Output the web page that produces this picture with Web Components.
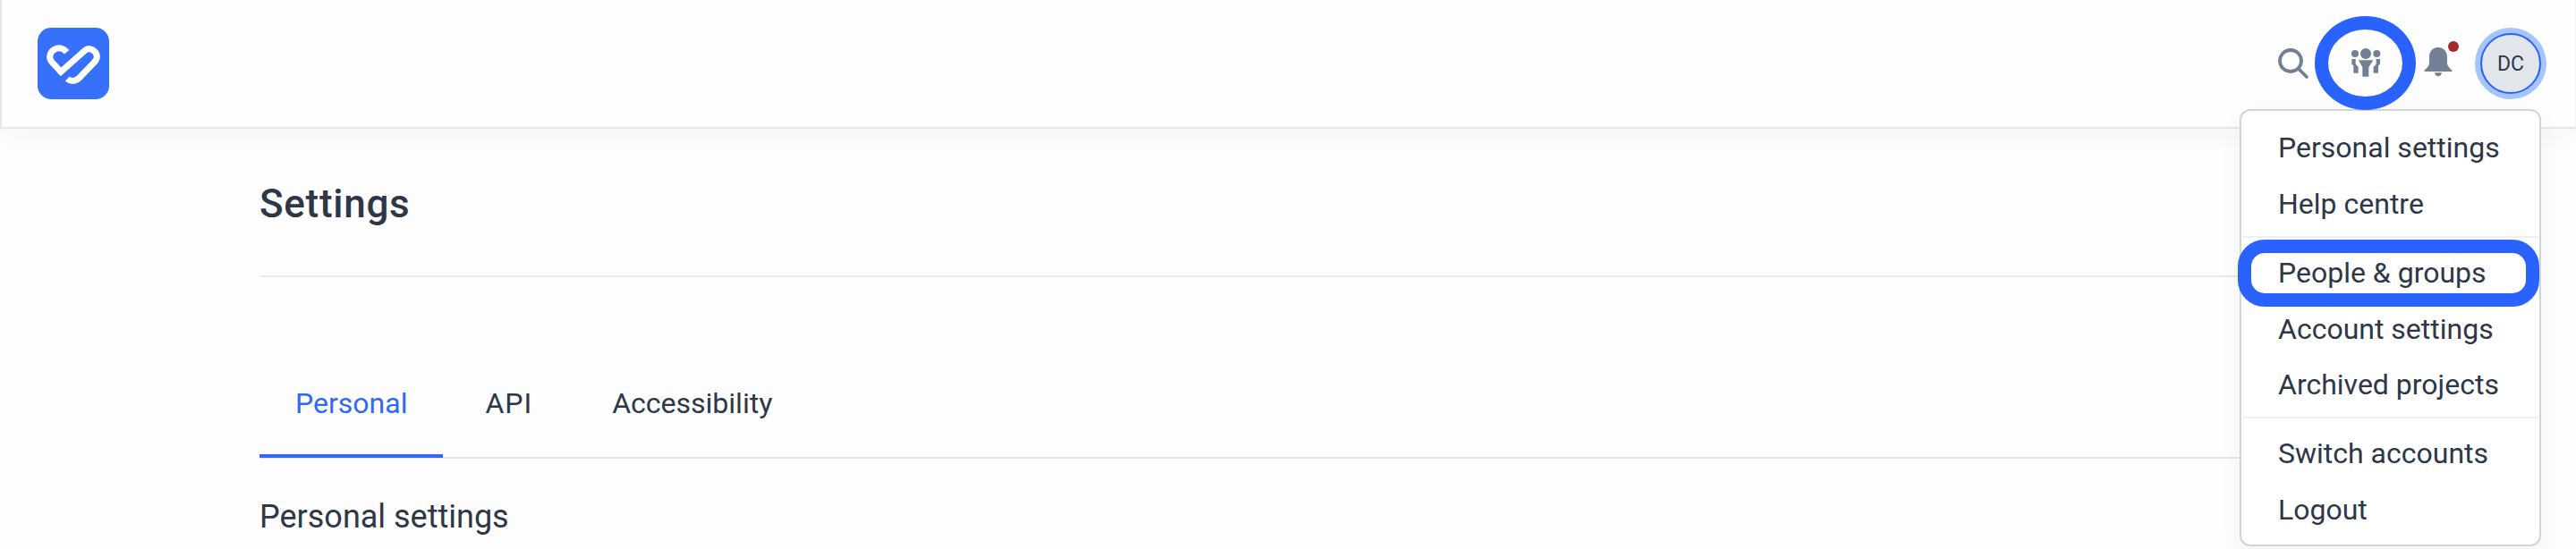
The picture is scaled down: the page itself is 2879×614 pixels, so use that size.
<!DOCTYPE html>
<html lang="en">
<head>
<meta charset="utf-8">
<title>Settings</title>
<style>
  html, body { margin: 0; padding: 0; background: #fdfdfd; }
  body { width: 2879px; height: 614px; overflow: hidden; font-family: Roboto, "Liberation Sans", sans-serif; color: #2d3748; }
</style>
</head>
<body>
<app-shell>
  <top-bar>
    <icon-button slot="actions" icon="search"></icon-button>
    <icon-button slot="actions" icon="people" ringed></icon-button>
    <icon-button slot="actions" icon="bell" dot></icon-button>
    <user-avatar slot="actions">DC</user-avatar>
  </top-bar>
  <settings-page>
    <span slot="title">Settings</span>
    <tab-item slot="tabs" active>Personal</tab-item>
    <tab-item slot="tabs" style="letter-spacing: 1px">API</tab-item>
    <tab-item slot="tabs">Accessibility</tab-item>
    <span slot="section">Personal settings</span>
  </settings-page>
  <user-menu>
    <menu-group first>
      <menu-item>Personal settings</menu-item>
      <menu-item>Help centre</menu-item>
    </menu-group>
    <menu-group>
      <menu-item>People &amp; groups</menu-item>
      <menu-item>Account settings</menu-item>
      <menu-item>Archived projects</menu-item>
    </menu-group>
    <menu-group last>
      <menu-item>Switch accounts</menu-item>
      <menu-item>Logout</menu-item>
    </menu-group>
  </user-menu>
</app-shell>

<script>
class AppShell extends HTMLElement {
  constructor() {
    super();
    this.attachShadow({ mode: "open" });
  }

  connectedCallback() {
    this.shadowRoot.innerHTML = `
      <style>
        :host { display: block; position: relative; width: 2879px; height: 614px; overflow: hidden; }
      </style>
      <slot></slot>
    `;
  }
}

class TopBar extends HTMLElement {
  constructor() {
    super();
    this.attachShadow({ mode: "open" });
  }

  connectedCallback() {
    this.shadowRoot.innerHTML = `
      <style>
        :host {
          display: flex;
          align-items: center;
          justify-content: space-between;
          box-sizing: border-box;
          height: 144px;
          padding: 0 32px 0 40px;
          background: #fefefe;
          border-left: 2px solid #e4e7eb;
          border-right: 1px solid #eff1f3;
          border-bottom: 2px solid #e4e7eb;
          box-shadow: 0 6px 24px rgba(45, 55, 72, 0.035);
        }
        .logo { display: block; width: 80px; height: 80px; }
        .actions { display: flex; align-items: center; }
      </style>
      <svg class="logo" viewBox="126 90 240 240">
        <rect x="126" y="90" width="240" height="240" rx="46" fill="#3670fb"/>
        <path d="M224 172 C214 160 198 154 184 162 C166 171 162 192 174 205 L204 238 L285 166 C298 154 324 166 325 187 C325 197 320 203 314 208 L266 258 C254 270 238 272 226 261"
          fill="none" stroke="#fff" stroke-width="21"/>
      </svg>
      <div class="actions"><slot name="actions"></slot></div>
    `;
  }
}

const ICONS = {
  search: `<svg width="36" height="36" viewBox="0 0 36 36" fill="none" stroke="#718096">
      <circle cx="15" cy="15" r="12" stroke-width="3.8"/>
      <path d="M24 24 L33 33" stroke-width="3.8" stroke-linecap="round"/>
    </svg>`,
  people: `<svg style="margin-top: -5px" width="34" height="37" viewBox="170 60 102 111" fill="#718096">
      <circle cx="221" cy="90" r="18"/>
      <circle cx="185" cy="90" r="12"/>
      <circle cx="258" cy="90" r="12"/>
      <path d="M197 112 H246 L231 136 V167 H210 V136 Z"/>
      <path d="M174 108 H187 V125 L196 135 V155 H180 V130 L174 125 Z"/>
      <path d="M269 108 H256 V125 L247 135 V155 H263 V130 L269 125 Z"/>
    </svg>`,
  bell: `<svg style="margin-top: -3.4px" width="34" height="34" viewBox="82 97 100 102" fill="#718096">
      <path d="M132 100 C114 100 102 114 102 132 V150 C102 162 94 170 86 176 Q83 180 88 181 H176 Q181 180 178 176 C170 170 162 162 162 150 V132 C162 114 150 100 132 100 Z"/>
      <path d="M120 185 H144 C142 193 138 197 132 197 S122 193 120 185 Z"/>
    </svg>`
};

class IconButton extends HTMLElement {
  constructor() {
    super();
    this.attachShadow({ mode: "open" });
  }

  connectedCallback() {
    this.shadowRoot.innerHTML = `
      <style>
        :host { display: flex; align-items: center; justify-content: center; position: relative; width: 81px; height: 80px; }
        svg { display: block; }
        .dot { position: absolute; left: 52px; top: 15px; width: 12px; height: 12px; border-radius: 50%; background: #a42828; }
        .ring {
          position: absolute; left: -16px; top: -13px; z-index: 5;
          box-sizing: border-box; width: 113px; height: 105px;
          border: 15px solid #2962ff; border-radius: 50%;
        }
      </style>
      ${ICONS[this.getAttribute("icon")]}
      ${this.hasAttribute("dot") ? '<span class="dot"></span>' : ""}
      ${this.hasAttribute("ringed") ? '<span class="ring"></span>' : ""}
    `;
  }
}

class UserAvatar extends HTMLElement {
  constructor() {
    super();
    this.attachShadow({ mode: "open" });
  }

  connectedCallback() {
    this.shadowRoot.innerHTML = `
      <style>
        :host {
          display: flex; align-items: center; justify-content: center;
          box-sizing: border-box; width: 68px; height: 68px; margin: 6px 6px 6px 7px;
          border: 2px solid #2962ff; border-radius: 50%;
          box-shadow: 0 0 0 6px #a4c5fd;
          background: #e2e5ea;
          font: 400 23px Roboto, sans-serif; color: #2d3748;
        }
      </style>
      <slot></slot>
    `;
  }
}

class SettingsPage extends HTMLElement {
  constructor() {
    super();
    this.attachShadow({ mode: "open" });
  }

  connectedCallback() {
    this.shadowRoot.innerHTML = `
      <style>
        :host { display: block; padding: 0 289px 0 290px; }
        .title {
          padding: 56px 0 52px;
          border-bottom: 2px solid #e8e9ec;
          font: 500 44px/56px Roboto, sans-serif;
          letter-spacing: 0.7px;
        }
        nav {
          display: flex;
          margin-top: 120px;
          border-bottom: 2px solid #e2e4e9;
        }
        .section {
          margin-top: 44px;
          font: 400 36px/42px Roboto, sans-serif;
        }
      </style>
      <div class="title"><slot name="title"></slot></div>
      <nav><slot name="tabs"></slot></nav>
      <div class="section"><slot name="section"></slot></div>
    `;
  }
}

class TabItem extends HTMLElement {
  constructor() {
    super();
    this.attachShadow({ mode: "open" });
  }

  connectedCallback() {
    this.shadowRoot.innerHTML = `
      <style>
        :host {
          display: block; position: relative;
          padding: 0 42px 39px;
          margin-right: 5px;
          font: 400 32px/42px Roboto, sans-serif;
          color: #2d3748;
        }
        :host([active]) { color: #2f6af5; padding-left: 40px; padding-right: 40px; }
        :host([active])::after {
          content: ""; position: absolute; left: 0; right: 0; bottom: -1px; height: 4px; background: #2f6af5;
        }
      </style>
      <slot></slot>
    `;
  }
}

class UserMenu extends HTMLElement {
  constructor() {
    super();
    this.attachShadow({ mode: "open" });
  }

  connectedCallback() {
    this.shadowRoot.innerHTML = `
      <style>
        :host {
          display: block; position: absolute; left: 2503px; top: 122px;
          box-sizing: border-box; width: 337px; height: 489px;
          padding: 0 1px;
          background: #fff;
          border: 2px solid #d2d4d7;
          border-radius: 12px;
          box-shadow: 0 6px 24px rgba(45, 55, 72, 0.05);
        }
        .mark {
          position: absolute; left: -4px; top: 144px;
          box-sizing: border-box; width: 337px; height: 75px;
          border: 15px solid #2962ff; border-radius: 30px;
        }
      </style>
      <slot></slot>
      <span class="mark"></span>
    `;
  }
}

class MenuGroup extends HTMLElement {
  constructor() {
    super();
    this.attachShadow({ mode: "open" });
  }

  connectedCallback() {
    this.shadowRoot.innerHTML = `
      <style>
        :host { display: block; padding: 8px 0 4.5px; border-bottom: 2px solid #eef0f3; }
        :host([first]) { padding: 10px 0 5px; }
        :host([last]) { padding: 8px 0; border-bottom: 0; }
      </style>
      <slot></slot>
    `;
  }
}

class MenuItem extends HTMLElement {
  constructor() {
    super();
    this.attachShadow({ mode: "open" });
  }

  connectedCallback() {
    this.shadowRoot.innerHTML = `
      <style>
        :host {
          display: block; position: relative;
          height: 62.5px; padding-left: 40px;
          font: 400 32px/62.5px Roboto, sans-serif;
          color: #2d3748;
          white-space: nowrap;
        }
      </style>
      <slot></slot>
    `;
  }
}

customElements.define("app-shell", AppShell);
customElements.define("top-bar", TopBar);
customElements.define("icon-button", IconButton);
customElements.define("user-avatar", UserAvatar);
customElements.define("settings-page", SettingsPage);
customElements.define("tab-item", TabItem);
customElements.define("user-menu", UserMenu);
customElements.define("menu-group", MenuGroup);
customElements.define("menu-item", MenuItem);
</script>
</body>
</html>
